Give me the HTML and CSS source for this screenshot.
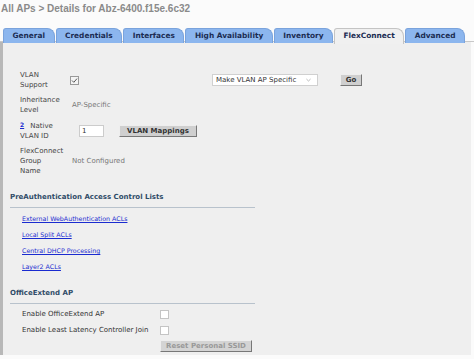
FILE: index.html
```html
<!DOCTYPE html>
<html lang="en">
<head>
  <meta charset="UTF-8">
  <title>All APs &gt; Details</title>
  <link rel="stylesheet" href="styles.css">
</head>
<body>
  <h1 class="crumb">All APs &gt; Details for Abz-6400.f15e.6c32</h1>

  <ul class="tabs">
    <li>General</li>
    <li>Credentials</li>
    <li>Interfaces</li>
    <li>High Availability</li>
    <li>Inventory</li>
    <li class="active">FlexConnect</li>
    <li>Advanced</li>
  </ul>

  <div class="panel">
    <div class="vlan">
      <div class="lbl">VLAN Support</div>
      <div class="val"><span class="check on"><svg viewBox="0 0 9 9" width="9" height="9"><path d="M2 4.5 L3.8 6.3 L7 2.6" fill="none" stroke="#555" stroke-width="1"/></svg></span></div>
      <div class="extra">
        <div class="select">Make VLAN AP Specific <svg viewBox="0 0 6 4" width="5" height="4"><path d="M0.5 0.8 L3 3.2 L5.5 0.8" fill="none" stroke="#999" stroke-width="0.8"/></svg></div>
        <button class="btn go">Go</button>
      </div>

      <div class="lbl">Inheritance Level</div>
      <div class="val muted">AP-Specific</div>
      <div class="extra"></div>

      <div class="lbl"><span class="note">2</span><span>Native</span><br><span>VLAN ID</span></div>
      <div class="val"><span class="field">1</span><button class="btn">VLAN Mappings</button></div>
      <div class="extra"></div>

      <div class="lbl">FlexConnect Group Name</div>
      <div class="val muted">Not Configured</div>
      <div class="extra"></div>
    </div>

    <section class="group">
      <h3>PreAuthentication Access Control Lists</h3>
      <ul class="links">
        <li><a href="#">External WebAuthentication ACLs</a></li>
        <li><a href="#">Local Split ACLs</a></li>
        <li><a href="#">Central DHCP Processing</a></li>
        <li><a href="#">Layer2 ACLs</a></li>
      </ul>
    </section>

    <section class="group oeap">
      <h3>OfficeExtend AP</h3>
      <div class="opts">
        <div class="opt"><span>Enable OfficeExtend AP</span><span class="check"></span></div>
        <div class="opt"><span>Enable Least Latency Controller Join</span><span class="check"></span></div>
        <div class="opt"><span></span><button class="btn wide" disabled>Reset Personal SSID</button></div>
      </div>
    </section>
  </div>
</body>
</html>
```

FILE: styles.css
```css
body {
  margin: 0;
  background: #fbfbfb;
  font-family: "DejaVu Sans", Verdana, sans-serif;
  font-size: 7px;
  color: #333;
}
.crumb {
  margin: 0;
  padding: 3px 0 0 1px;
  height: 26px;
  box-sizing: border-box;
  font-family: "Liberation Sans", Arial, sans-serif;
  font-size: 10px;
  font-weight: bold;
  color: #8a8a8a;
}
.tabs {
  display: flex;
  gap: 1px;
  margin: 0;
  padding: 2px 0 0 3px;
  list-style: none;
  height: 16px;
  box-sizing: border-box;
  border-bottom: 1px solid #c8c8c8;
}
.tabs li {
  height: 14px;
  line-height: 14px;
  padding: 0 8.5px;
  background: #8cb6ee;
  border: 1px solid #7aa3dc;
  border-bottom: none;
  border-radius: 3px 8px 0 0;
  font-size: 7.4px;
  font-weight: bold;
  color: #1b2c52;
}
.tabs li.active {
  background: #f0f0f0;
  border-color: #c4c4c4;
  height: 15px;
  margin-bottom: -1px;
}
.panel {
  background: #efefef;
  border-left: 3px solid #b8b8b8;
  margin-right: 3px;
  padding: 28px 0 4px 0;
  height: 313px;
  box-sizing: border-box;
}
.vlan {
  display: grid;
  grid-template-columns: 50px 142px auto;
  row-gap: 5px;
  padding-left: 17px;
  line-height: 10px;
}
.lbl {
  color: #444;
  padding-right: 6px;
}
.val {
  display: flex;
  align-items: center;
}
.muted {
  color: #777;
  padding-left: 2px;
}
.extra {
  display: flex;
  align-items: center;
  gap: 22px;
}
.check {
  display: inline-block;
  width: 9px;
  height: 9px;
  box-sizing: border-box;
  border: 1px solid #c4c4c4;
  background: #fff;
}
.check.on {
  border-color: #999;
  background: #f4f4f4;
}
.check svg {
  display: block;
  margin: -1px;
}
.select {
  display: flex;
  align-items: center;
  justify-content: space-between;
  width: 106px;
  height: 12px;
  box-sizing: border-box;
  padding: 0 6px 0 3px;
  background: #fff;
  border: 1px solid #d0d0d0;
  color: #333;
}
.btn {
  font-family: "DejaVu Sans", Verdana, sans-serif;
  font-size: 7px;
  font-weight: bold;
  color: #333;
  background: #cfcfcf;
  border: 1px solid;
  border-color: #eee #777 #777 #eee;
  padding: 0 7px;
  height: 12px;
  line-height: 10px;
}
.go {
  width: 22px;
  padding: 0;
}
.field {
  width: 25px;
  height: 12px;
  box-sizing: border-box;
  margin: 0 15px 0 9px;
  padding-left: 2px;
  background: #fff;
  border: 1px solid #ccc;
  line-height: 10px;
}
.note {
  color: #1a2bd0;
  font-weight: bold;
  font-size: 6px;
  text-decoration: underline;
  vertical-align: 1px;
  margin-right: 6px;
}
.group {
  margin-left: 7px;
  width: 245px;
}
.group h3 {
  margin: 16px 0 0;
  padding: 0 0 5px 0;
  font-size: 7px;
  line-height: 10px;
  color: #2f4c68;
  border-bottom: 1px solid #b8c2cc;
}
.oeap h3 {
  margin-top: 11px;
}
.links {
  list-style: none;
  margin: 0;
  padding: 5px 0 0 12px;
  font-size: 6.3px;
}
.links li {
  height: 16px;
  line-height: 12px;
}
.links a {
  color: #1a2bd0;
}
.opts {
  padding: 2px 0 0 12px;
}
.opt {
  display: grid;
  grid-template-columns: 138px auto;
  align-items: center;
  height: 16px;
}
.wide {
  width: 92px;
  padding: 0;
  color: #999;
  background: #d4d4d4;
}
```
